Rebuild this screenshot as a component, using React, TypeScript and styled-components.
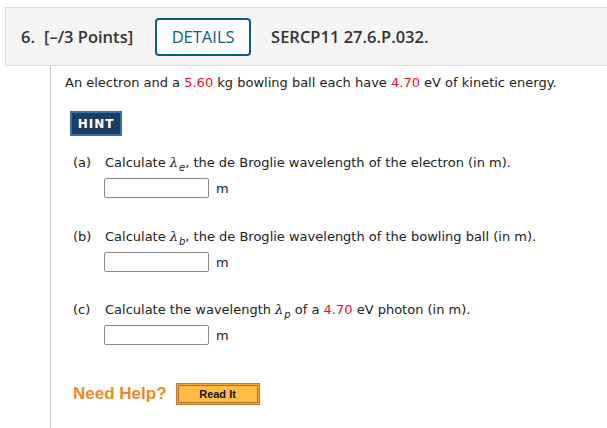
import styled, { createGlobalStyle } from "styled-components";

const GlobalStyle = createGlobalStyle`
  body {
    margin: 0;
    background: #ffffff;
  }
`;

const Page = styled.div`
  padding: 7px 0 0 5px;
  width: 602px;
  height: 421px;
  overflow: hidden;
`;

const Header = styled.div`
  display: flex;
  align-items: center;
  height: 57px;
  width: 620px;
  background: #f5f5f5;
  border: 1px solid #dddddd;
  border-right: none;
  font-family: "Open Sans", sans-serif;
  font-weight: 600;
  font-size: 16.5px;
  color: #333333;
`;

const Number = styled.span`
  margin-left: 15px;
  margin-right: 9px;
`;

const Points = styled.span`
  margin-right: 22px;
`;

const DetailsButton = styled.div`
  display: flex;
  align-items: center;
  justify-content: center;
  width: 92px;
  height: 34px;
  border: 2px solid #0b5c96;
  border-radius: 4px;
  background: #ffffff;
  color: #0b5c96;
  font-weight: 400;
  font-size: 16.5px;
  margin-right: 20px;
`;

const Body = styled.div`
  margin-left: 45px;
  border-left: 1px solid #cccccc;
  padding: 8px 0 0 14px;
  height: 360px;
  font-family: "DejaVu Sans", Verdana, sans-serif;
  font-size: 13px;
  color: #222222;
`;

const Intro = styled.p`
  margin: 0;
  line-height: 18px;
`;

const Red = styled.span`
  color: #e8111e;
`;

const HintButton = styled.div`
  display: inline-flex;
  align-items: center;
  justify-content: center;
  margin: 19px 0 0 5px;
  width: 48px;
  height: 21px;
  background: #1d3e61;
  border: 2px solid #3471ad;
  color: #ffffff;
  font-weight: 700;
  font-size: 12px;
  letter-spacing: 1px;
`;

const Part = styled.div<{ gap: number }>`
  margin-top: ${(p) => p.gap}px;
`;

const PartRow = styled.div`
  display: flex;
  line-height: 18px;
`;

const Label = styled.span`
  width: 32px;
  margin-left: 8px;
`;

const Lambda = styled.span`
  font-family: "DejaVu Serif", serif;
  font-style: italic;
  margin: 0 1px 0 4px;
`;

const Sub = styled.sub`
  font-style: italic;
  font-size: 10px;
  vertical-align: -4px;
  line-height: 0;
`;

const AnswerRow = styled.div`
  display: flex;
  align-items: center;
  gap: 7px;
  margin: 6px 0 0 39px;
`;

const AnswerBox = styled.div`
  width: 103px;
  height: 18px;
  border: 1px solid #8a8a8a;
  border-radius: 2px;
  background: #ffffff;
`;

const HelpRow = styled.div`
  display: flex;
  align-items: center;
  gap: 9px;
  margin: 38px 0 0 8px;
`;

const NeedHelp = styled.span`
  font-family: "Liberation Sans", Arial, sans-serif;
  font-weight: 700;
  font-size: 17px;
  color: #ee8a1b;
`;

const ReadIt = styled.div`
  width: 80px;
  height: 18px;
  padding: 1px;
  border: 1px solid #c87a27;
  background: #f9a53c;
`;

const ReadItInner = styled.div`
  height: 16px;
  display: flex;
  align-items: center;
  justify-content: center;
  border: 1px solid #b36f22;
  background: #ffbd45;
  font-family: "Liberation Sans", Arial, sans-serif;
  font-weight: 700;
  font-size: 11px;
  color: #111111;
`;

const App = () => {
  return (
    <Page>
      <GlobalStyle />
      <Header>
        <Number>6.</Number>
        <Points>[–/3 Points]</Points>
        <DetailsButton>DETAILS</DetailsButton>
        <span>SERCP11 27.6.P.032.</span>
      </Header>
      <Body>
        <Intro>
          An electron and a <Red>5.60</Red> kg bowling ball each have <Red>4.70</Red> eV of
          kinetic energy.
        </Intro>
        <HintButton>HINT</HintButton>
        <Part gap={18}>
          <PartRow>
            <Label>(a)</Label>
            <span>
              Calculate<Lambda>λ</Lambda>
              <Sub>e</Sub>, the de Broglie wavelength of the electron (in m).
            </span>
          </PartRow>
          <AnswerRow>
            <AnswerBox />
            <span>m</span>
          </AnswerRow>
        </Part>
        <Part gap={30}>
          <PartRow>
            <Label>(b)</Label>
            <span>
              Calculate<Lambda>λ</Lambda>
              <Sub>b</Sub>, the de Broglie wavelength of the bowling ball (in m).
            </span>
          </PartRow>
          <AnswerRow>
            <AnswerBox />
            <span>m</span>
          </AnswerRow>
        </Part>
        <Part gap={29}>
          <PartRow>
            <Label>(c)</Label>
            <span>
              Calculate the wavelength<Lambda>λ</Lambda>
              <Sub>p</Sub> of a <Red>4.70</Red> eV photon (in m).
            </span>
          </PartRow>
          <AnswerRow>
            <AnswerBox />
            <span>m</span>
          </AnswerRow>
        </Part>
        <HelpRow>
          <NeedHelp>Need Help?</NeedHelp>
          <ReadIt>
            <ReadItInner>Read It</ReadItInner>
          </ReadIt>
        </HelpRow>
      </Body>
    </Page>
  );
};

export default App;
